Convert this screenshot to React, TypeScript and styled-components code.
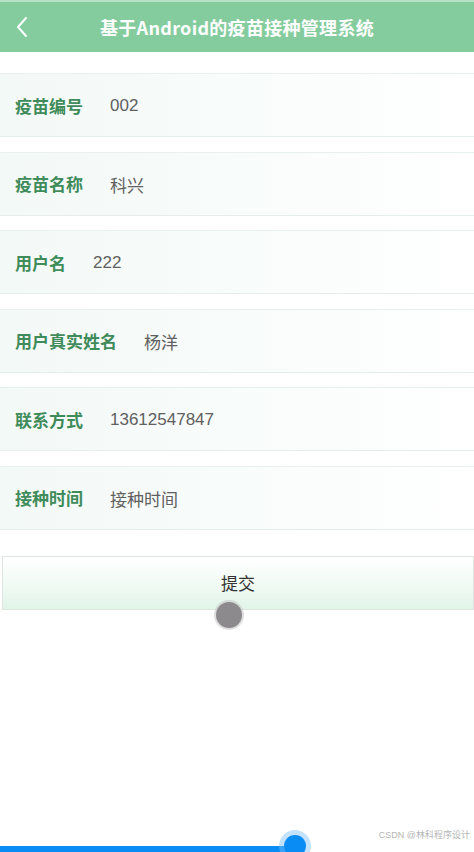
import React from 'react';
import styled, { createGlobalStyle } from 'styled-components';

const GlobalStyle = createGlobalStyle`
  html, body {
    margin: 0;
    padding: 0;
    background: #ffffff;
  }
  body {
    font-family: "Noto Sans CJK SC", "Liberation Sans", Arial, sans-serif;
  }
`;

const Screen = styled.div`
  position: relative;
  width: 474px;
  height: 852px;
  overflow: hidden;
  background: #ffffff;
`;

const TopBar = styled.div`
  height: 50px;
  border-top: 2px solid #b7e0c5;
  background: #84cc9e;
  display: flex;
  align-items: center;
  position: relative;
`;

const BackButton = styled.div`
  width: 48px;
  height: 50px;
  display: flex;
  align-items: center;
  justify-content: center;
  margin-left: -2px;
`;

const Title = styled.div`
  flex: 1;
  text-align: center;
  margin-right: 46px;
  color: #ffffff;
  font-size: 18px;
  font-weight: bold;
  letter-spacing: 0.3px;
`;

const Form = styled.div`
  display: flex;
  flex-direction: column;
  gap: 14.5px;
  padding-top: 21px;
`;

const Row = styled.div`
  height: 62px;
  display: flex;
  align-items: center;
  padding-left: 15px;
  border-top: 1px solid #e9f1ee;
  border-bottom: 1px solid #e6eeeb;
  background: linear-gradient(to right, #f3f9f7 0%, #f8fcfa 50%, #ffffff 100%);
`;

const Label = styled.span`
  color: #3f8b5a;
  font-size: 17px;
  font-weight: bold;
  margin-right: 27px;
`;

const Value = styled.span`
  color: #606060;
  font-size: 17px;
  padding-top: 2px;
  font-family: "Liberation Sans", "Noto Sans CJK SC", Arial, sans-serif;
`;

const SubmitButton = styled.div`
  margin: 26px 0 0 2px;
  height: 52px;
  display: flex;
  align-items: center;
  justify-content: center;
  border: 1px solid #dfe6e2;
  background: linear-gradient(to bottom, #ffffff 0%, #f3fbf6 45%, #e2f4e8 100%);
  color: #333333;
  font-size: 17px;
`;

const TouchDot = styled.div`
  position: absolute;
  left: 216px;
  top: 602px;
  width: 26px;
  height: 26px;
  border-radius: 50%;
  background: #8c8a8d;
  box-shadow: 0 0 0 2px rgba(200, 200, 200, 0.6);
`;

const Progress = styled.div`
  position: absolute;
  left: 0;
  bottom: 0;
  width: 296px;
  height: 6px;
  background: #0a8cf5;
`;

const Knob = styled.div`
  position: absolute;
  left: 284px;
  top: 835px;
  width: 22px;
  height: 22px;
  border-radius: 50%;
  background: #0a8cf5;
  box-shadow: 0 0 0 5px rgba(120, 190, 250, 0.45);
`;

const Watermark = styled.div`
  position: absolute;
  right: 4px;
  bottom: 11px;
  font-size: 9px;
  color: #b5b5b5;
  font-family: "Liberation Sans", "Noto Sans CJK SC", Arial, sans-serif;
`;

const fields = [
  { label: '疫苗编号', value: '002' },
  { label: '疫苗名称', value: '科兴' },
  { label: '用户名', value: '222' },
  { label: '用户真实姓名', value: '杨洋' },
  { label: '联系方式', value: '13612547847' },
  { label: '接种时间', value: '接种时间' },
];

const App: React.FC = () => {
  return (
    <Screen>
      <GlobalStyle />
      <TopBar>
        <BackButton>
          <svg width="14" height="22" viewBox="0 0 14 22" fill="none">
            <path d="M11 2 L3 11 L11 20" stroke="#ffffff" strokeWidth="2" strokeLinecap="round" strokeLinejoin="round" />
          </svg>
        </BackButton>
        <Title>基于Android的疫苗接种管理系统</Title>
      </TopBar>
      <Form>
        {fields.map((f) => (
          <Row key={f.label}>
            <Label>{f.label}</Label>
            <Value>{f.value}</Value>
          </Row>
        ))}
      </Form>
      <SubmitButton>提交</SubmitButton>
      <TouchDot />
      <Progress />
      <Knob />
      <Watermark>CSDN @林科程序设计</Watermark>
    </Screen>
  );
};

export default App;
